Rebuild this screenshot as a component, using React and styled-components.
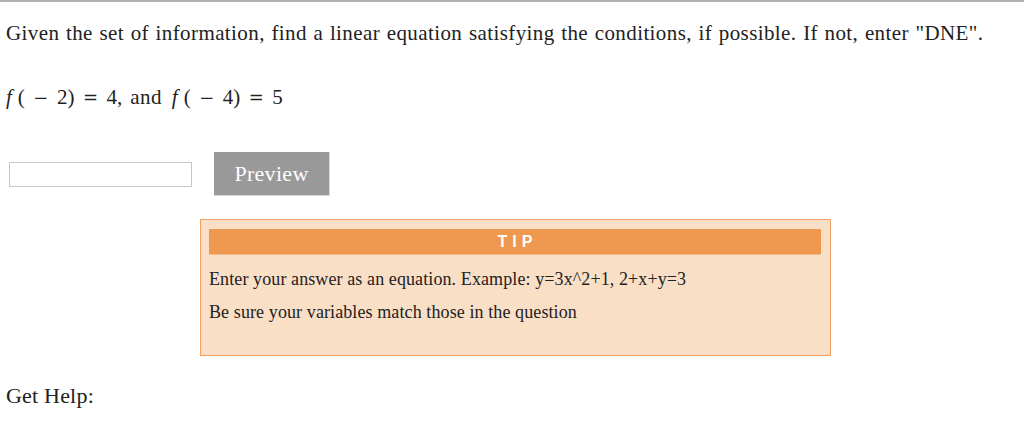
import React from "react";
import styled, { createGlobalStyle } from "styled-components";

const Global = createGlobalStyle`
  html, body {
    margin: 0;
    padding: 0;
    background: #fff;
  }
  body {
    font-family: "Liberation Serif", "Times New Roman", serif;
    color: #222;
  }
`;

const Page = styled.div`
  width: 1024px;
  height: 426px;
  border-top: 2px solid #b0b0b0;
  box-sizing: border-box;
  padding: 0 6px;
  overflow: hidden;
`;

const Question = styled.p`
  margin: 17px 0 0;
  font-size: 21px;
  line-height: 28px;
  letter-spacing: 0.4px;
  word-spacing: 1px;
  white-space: nowrap;
`;

const MathLine = styled.p`
  margin: 36px 0 0;
  font-size: 21px;
  line-height: 28px;
  white-space: nowrap;
`;

const Fn = styled.span`
  font-style: italic;
  margin-right: 6px;
`;

const Op = styled.span`
  margin: 0 8.5px;
  font-family: "DejaVu Serif", serif;
  font-size: 18px;
  line-height: 0;
`;

const Word = styled.span`
  margin: 0 10px 0 8px;
  letter-spacing: 0.4px;
`;

const AnswerRow = styled.div`
  display: flex;
  align-items: center;
  gap: 22px;
  margin: 41px 0 0 3px;
`;

const Field = styled.input`
  width: 183px;
  height: 25px;
  box-sizing: border-box;
  border: 1px solid #c8c8c8;
  padding: 0 4px;
  font-size: 16px;
  font-family: inherit;
  outline: none;
`;

const Button = styled.button`
  width: 116px;
  height: 44px;
  background: #999;
  border: none;
  border-right: 1px solid #d8d8d8;
  border-bottom: 1px solid #d8d8d8;
  color: #fff;
  font-family: "Liberation Serif", "Times New Roman", serif;
  font-size: 22px;
  letter-spacing: 0.3px;
  padding: 0;
`;

const Tip = styled.div`
  width: 631px;
  height: 137px;
  box-sizing: border-box;
  margin: 23px 0 0 194px;
  background: #fadfc7;
  border: 1.5px solid #efa064;
  padding: 9px 9px 0 8px;
`;

const TipHead = styled.div`
  height: 25px;
  background: #ef9850;
  border-bottom: 1px solid #f5bb8c;
  color: #fff;
  font-family: "Liberation Sans", Arial, sans-serif;
  font-weight: bold;
  font-size: 16px;
  letter-spacing: 5px;
  padding-left: 5px;
  line-height: 25px;
  text-align: center;
`;

const TipText = styled.p`
  margin: ${(p) => p.$top}px 0 0;
  font-size: 18px;
  letter-spacing: 0.1px;
  line-height: 20px;
  color: #222;
`;

const Help = styled.p`
  margin: 26px 0 0;
  font-size: 22px;
  letter-spacing: 0.2px;
  line-height: 28px;
`;

export default function App() {
  return (
    <>
      <Global />
      <Page>
        <Question>
          Given the set of information, find a linear equation satisfying the conditions, if possible. If not, enter "DNE".
        </Question>
        <MathLine>
          <Fn>f</Fn>(<Op>−</Op>2)<Op>=</Op>4,<Word>and</Word>
          <Fn>f</Fn>(<Op>−</Op>4)<Op>=</Op>5
        </MathLine>
        <AnswerRow>
          <Field type="text" />
          <Button>Preview</Button>
        </AnswerRow>
        <Tip>
          <TipHead>TIP</TipHead>
          <TipText $top={14}>Enter your answer as an equation. Example: y=3x^2+1, 2+x+y=3</TipText>
          <TipText $top={13}>Be sure your variables match those in the question</TipText>
        </Tip>
        <Help>Get Help:</Help>
      </Page>
    </>
  );
}
